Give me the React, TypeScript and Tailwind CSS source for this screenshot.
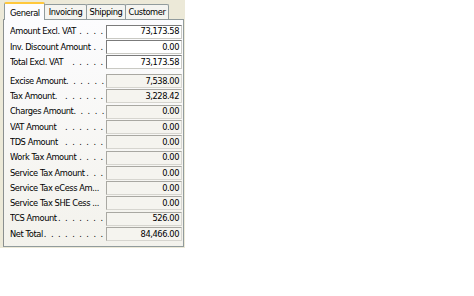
import React from "react";

const group1 = [
  ["Amount Excl. VAT", ". . . .", "73,173.58"],
  ["Inv. Discount Amount", ". .", "0.00"],
  ["Total Excl. VAT", ". . . . .", "73,173.58"],
];
const group2 = [
  ["Excise Amount", ". . . . . .", "7,538.00"],
  ["Tax Amount.", ". . . . . .", "3,228.42"],
  ["Charges Amount", ". . . . .", "0.00"],
  ["VAT Amount", ". . . . . .", "0.00"],
  ["TDS Amount", ". . . . . .", "0.00"],
  ["Work Tax Amount", ". . . .", "0.00"],
  ["Service Tax Amount", ". . .", "0.00"],
  ["Service Tax eCess Am...", "", "0.00"],
  ["Service Tax SHE Cess ...", "", "0.00"],
  ["TCS Amount", ". . . . . . .", "526.00"],
  ["Net Total", ". . . . . . . . .", "84,466.00"],
];

function Row({ label, dots, value, editable }: { label: string; dots: string; value: string; editable?: boolean }) {
  return (
    <div className="flex items-center h-[15.3px]">
      <div className="w-[96px] whitespace-nowrap overflow-hidden flex justify-between pr-[2px]">
        <span>{label}</span>
        <span className="tracking-[0.9px]">{dots}</span>
      </div>
      <div
        className={
          "w-[76px] h-[14px] flex items-center justify-end pr-[2px] border " +
          (editable
            ? "bg-white border-[#7b7b7b] border-r-[#c9c9c3] border-b-[#c9c9c3]"
            : "bg-[#f5f4ef] border-[#a9a8a2] border-r-[#d6d5cf] border-b-[#d6d5cf]")
        }
      >
        {value}
      </div>
    </div>
  );
}

export default function App() {
  const tabs = ["General", "Invoicing", "Shipping", "Customer"];
  return (
    <div className="w-[474px] h-[296px] bg-white" style={{ fontFamily: "'DejaVu Sans', sans-serif" }}>
      <div className="w-[185px] h-[248px] bg-[#ece9d8] pt-[2px] pl-[3px] text-[8.3px] tracking-[-0.42px] text-black">
        <div className="flex items-end h-[17px] pl-[1px]">
          {tabs.map((t, i) => (
            <div
              key={t}
              className={
                i === 0
                  ? "h-[18px] w-[41px] -mb-[1px] pl-[5px] pt-[3px] bg-[#fcfcfe] border border-b-0 border-[#919b9c] border-t-2 border-t-[#ffc83c] rounded-t-[2px] relative z-10"
                  : "h-[15px] pt-[1px] bg-[#f4f4f0] border border-b-0 border-[#919b9c] rounded-t-[2px] -ml-[1px] text-center"
              }
              style={i === 1 ? { width: 43 } : i === 2 ? { width: 40 } : i === 3 ? { width: 44 } : undefined}
            >
              {t}
            </div>
          ))}
        </div>
        <div className="w-[181px] h-[228px] bg-gradient-to-b from-[#fcfcfe] to-[#f3f2ec] border border-[#919b9c] border-l-[#8a8f8f] pl-[6px] pt-[4px]">
          {group1.map(([l, d, v]) => (
            <Row key={l} label={l} dots={d} value={v} editable />
          ))}
          <div className="h-[3.5px]" />
          {group2.map(([l, d, v]) => (
            <Row key={l} label={l} dots={d} value={v} />
          ))}
        </div>
      </div>
    </div>
  );
}
